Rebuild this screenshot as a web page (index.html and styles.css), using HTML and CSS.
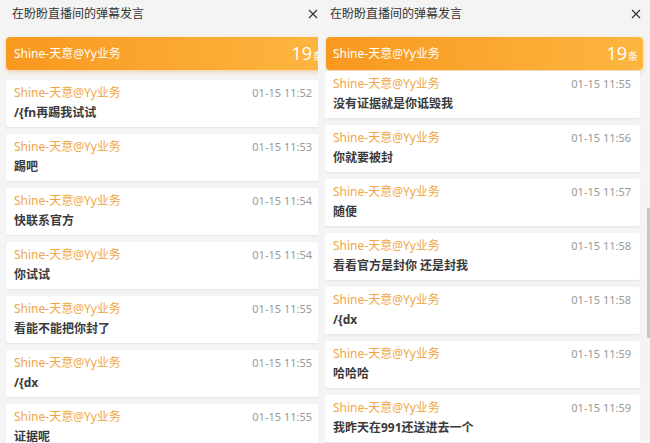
FILE: index.html
```html
<!DOCTYPE html>
<html lang="zh-CN">
<head>
<meta charset="utf-8">
<title>弹幕发言</title>
<link rel="stylesheet" href="styles.css">
</head>
<body>
<div class="stage">

  <section class="panel panel--left">
    <div class="panel-inner">
      <header class="titlebar">
        <span class="title">在盼盼直播间的弹幕发言</span>
        <svg class="close" viewBox="0 0 10 10" width="10" height="10"><path d="M1 1L9 9M9 1L1 9" stroke="#333" stroke-width="1.2" fill="none"/></svg>
      </header>
      <div class="userbar">
        <span class="userbar-name">Shine-天意@Yy业务</span>
        <span class="userbar-count">19<small>条</small></span>
      </div>
      <ul class="list">
        <li class="card"><div class="card-head"><span class="name">Shine-天意@Yy业务</span><span class="time">01-15 11:52</span></div><p class="msg">/{fn再踢我试试</p></li>
        <li class="card"><div class="card-head"><span class="name">Shine-天意@Yy业务</span><span class="time">01-15 11:53</span></div><p class="msg">踢吧</p></li>
        <li class="card"><div class="card-head"><span class="name">Shine-天意@Yy业务</span><span class="time">01-15 11:54</span></div><p class="msg">快联系官方</p></li>
        <li class="card"><div class="card-head"><span class="name">Shine-天意@Yy业务</span><span class="time">01-15 11:54</span></div><p class="msg">你试试</p></li>
        <li class="card"><div class="card-head"><span class="name">Shine-天意@Yy业务</span><span class="time">01-15 11:55</span></div><p class="msg">看能不能把你封了</p></li>
        <li class="card"><div class="card-head"><span class="name">Shine-天意@Yy业务</span><span class="time">01-15 11:55</span></div><p class="msg">/{dx</p></li>
        <li class="card"><div class="card-head"><span class="name">Shine-天意@Yy业务</span><span class="time">01-15 11:55</span></div><p class="msg">证据呢</p></li>
      </ul>
    </div>
  </section>

  <section class="panel panel--right">
    <header class="titlebar">
      <span class="title">在盼盼直播间的弹幕发言</span>
      <svg class="close" viewBox="0 0 10 10" width="10" height="10"><path d="M1 1L9 9M9 1L1 9" stroke="#333" stroke-width="1.2" fill="none"/></svg>
    </header>
    <div class="userbar">
      <span class="userbar-name">Shine-天意@Yy业务</span>
      <span class="userbar-count">19<small>条</small></span>
    </div>
    <div class="scroller">
      <ul class="list">
        <li class="card"><div class="card-head"><span class="name">Shine-天意@Yy业务</span><span class="time">01-15 11:55</span></div><p class="msg">没有证据就是你诋毁我</p></li>
        <li class="card"><div class="card-head"><span class="name">Shine-天意@Yy业务</span><span class="time">01-15 11:56</span></div><p class="msg">你就要被封</p></li>
        <li class="card"><div class="card-head"><span class="name">Shine-天意@Yy业务</span><span class="time">01-15 11:57</span></div><p class="msg">随便</p></li>
        <li class="card"><div class="card-head"><span class="name">Shine-天意@Yy业务</span><span class="time">01-15 11:58</span></div><p class="msg">看看官方是封你 还是封我</p></li>
        <li class="card"><div class="card-head"><span class="name">Shine-天意@Yy业务</span><span class="time">01-15 11:58</span></div><p class="msg">/{dx</p></li>
        <li class="card"><div class="card-head"><span class="name">Shine-天意@Yy业务</span><span class="time">01-15 11:59</span></div><p class="msg">哈哈哈</p></li>
        <li class="card"><div class="card-head"><span class="name">Shine-天意@Yy业务</span><span class="time">01-15 11:59</span></div><p class="msg">我昨天在991还送进去一个</p></li>
      </ul>
      <div class="scroll-thumb"></div>
    </div>
  </section>

</div>
</body>
</html>
```

FILE: styles.css
```css
* { box-sizing: border-box; }

html, body {
  margin: 0;
  padding: 0;
  height: 443px;
  overflow: hidden;
  background: #f4f4f4;
  font-family: "Noto Sans", "Noto Sans CJK SC", sans-serif;
  color: #333;
}

.stage {
  display: flex;
  gap: 7px;
  height: 443px;
}

.panel {
  height: 443px;
  overflow: hidden;
  flex: none;
}

/* left column is cut off at its right edge */
.panel--left { width: 318px; }
.panel--left .panel-inner { width: 330px; }

.panel--right {
  width: 325px;
  position: relative;
}

/* title row */
.titlebar {
  height: 37px;
  display: flex;
  align-items: flex-start;
  justify-content: space-between;
  padding-top: 5px;
}
.title {
  font-size: 12px;
  line-height: 16px;
  font-family: "Noto Sans CJK SC", sans-serif;
  color: #333;
}
.close { margin-top: 4px; }

.panel--left .titlebar { padding-left: 12px; padding-right: 12px; }
.panel--right .titlebar { padding-left: 5px; padding-right: 9px; }

/* orange user summary bar */
.userbar {
  height: 33px;
  width: 317px;
  border-radius: 4px;
  background: linear-gradient(to right, #f8981f, #fdb640);
  box-shadow: 0 2px 4px rgba(230, 140, 30, 0.35);
  color: #fff;
  display: flex;
  align-items: center;
  justify-content: space-between;
  padding: 0 5px 0 8px;
}
.panel--left .userbar { margin-left: 6px; width: 322px; }
.panel--right .userbar { margin-left: 1px; padding-left: 7px; }

.userbar-name {
  font-size: 12px;
  line-height: 16px;
}
.userbar-count {
  font-size: 18px;
  line-height: 22px;
  font-family: "Open Sans", sans-serif;
  padding-top: 1px;
}
.userbar-count small {
  font-size: 10px;
  margin-left: 1px;
  font-family: "Noto Sans CJK SC", sans-serif;
}

/* message cards */
.list {
  list-style: none;
  margin: 0;
  padding: 0;
  display: flex;
  flex-direction: column;
  gap: 7px;
}
.panel--left .list { margin-top: 10px; padding-left: 6px; }

.scroller {
  margin-top: 1px;
  height: 373px;
  overflow: hidden;
}

.card {
  flex: none;
  width: 315px;
  height: 47px;
  background: #fff;
  border-radius: 2px;
  box-shadow: 0 1px 2px rgba(0, 0, 0, 0.07);
  padding: 4px 9px 0 8px;
}

.card-head {
  display: flex;
  justify-content: space-between;
  align-items: center;
  height: 18px;
}
.name {
  font-size: 12px;
  color: #f0a645;
  line-height: 18px;
}
.time {
  font-size: 11px;
  color: #999;
  line-height: 18px;
}
.msg {
  margin: 2px 0 0;
  font-size: 12px;
  line-height: 18px;
  font-weight: 700;
  color: #3a3a3a;
}

.scroll-thumb {
  position: absolute;
  right: 0;
  top: 208px;
  width: 3px;
  height: 130px;
  background: #c8c8c8;
}
```
